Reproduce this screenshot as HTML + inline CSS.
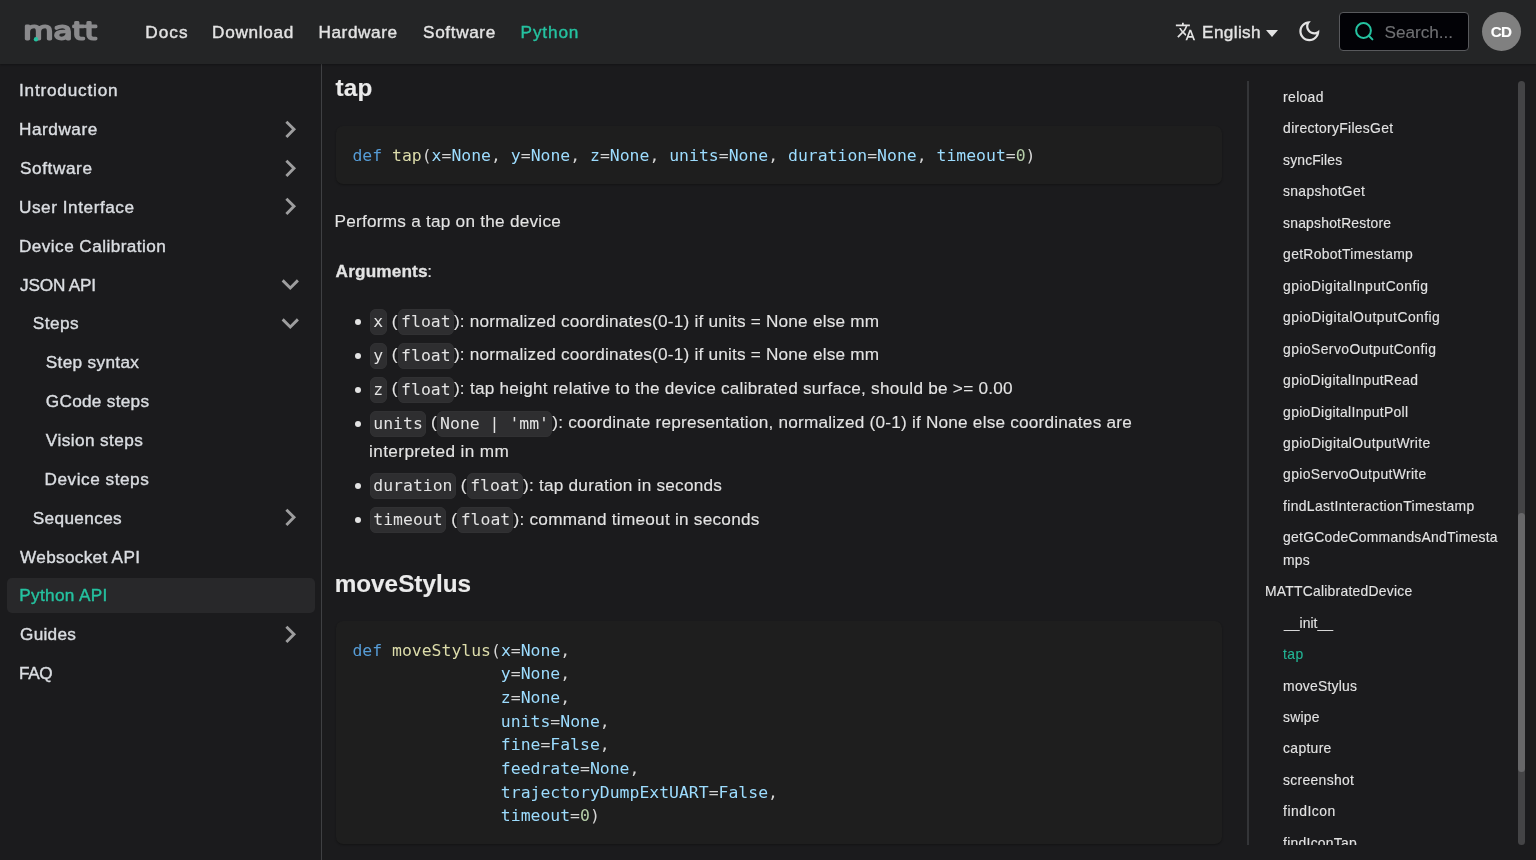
<!DOCTYPE html>
<html lang="en"><head>
<meta charset="utf-8">
<title>Python API | MATT</title>
<style>
*{box-sizing:border-box;margin:0;padding:0}
html,body{width:1536px;height:860px;overflow:hidden;background:#1b1b1d;color:#e3e3e3;font-family:"Liberation Sans",Arial,sans-serif;-webkit-text-stroke:0.12px}
body{position:relative;will-change:transform}
a{color:inherit;text-decoration:none}
.t{position:relative;white-space:pre}
.navbar{position:absolute;left:0;top:0;width:1536px;height:64px;background:#242526;box-shadow:0 1px 2px 0 rgba(0,0,0,.3);z-index:10}
.logo{position:absolute;left:0;top:0;-webkit-text-stroke:0}
.navlink{-webkit-text-stroke:0.4px;position:absolute;font-size:17.2px;line-height:24px;color:#e3e3e3;white-space:nowrap}
.navlink.active{color:#25c2a0}
.langicon{position:absolute;left:1175.4px;top:20.5px}
.langtext{-webkit-text-stroke:0.4px;position:absolute;left:1202px;font-size:17.2px;line-height:24px;color:#e3e3e3;white-space:nowrap}
.caret{position:absolute;left:1266px;top:30px;width:0;height:0;border-left:6.25px solid transparent;border-right:6.25px solid transparent;border-top:7px solid #e3e3e3}
.moon{position:absolute;left:1295.7px;top:18.2px}
.search{position:absolute;left:1339px;top:12px;width:130px;height:39px;border:1px solid #58595c;border-radius:4px;background:#020206}
.search svg{position:absolute;left:14.4px;top:8px}
.stext{position:absolute;left:44px;font-size:17.2px;line-height:24px;color:#6f7073;white-space:nowrap}
.avatar{position:absolute;left:1482px;top:12px;width:39px;height:39px;border-radius:50%;background:#808080;color:#fff;font-weight:700;font-size:15.2px;line-height:39px;white-space:nowrap;padding-left:8px}
.sidebar{position:absolute;left:0;top:64px;width:322px;height:796px;border-right:1px solid #3f4043}
.sb{-webkit-text-stroke:0.4px;position:absolute;left:6.5px;width:308.2px;height:34.56px;border-radius:5px;font-size:17.2px;line-height:34.56px;color:#dadde1;white-space:nowrap}
.sb.active{background:#28282a;color:#25c2a0}
.chev{position:absolute;left:266.9px;top:-0.4px}
.main{position:absolute;left:335.5px;top:64px;width:886.5px}
h3{position:absolute;left:-1.5px;font-size:24.3px;line-height:30px;font-weight:700;color:#ebebeb;white-space:nowrap}
.code{-webkit-text-stroke:0;position:absolute;left:0;width:886.5px;background:#1e1e1e;border-radius:7px;box-shadow:0 1px 2px 0 rgba(0,0,0,.3);font-family:"DejaVu Sans Mono","Liberation Mono",monospace;font-size:16.44px;line-height:23.66px;color:#9cdcfe;white-space:pre;padding-left:16.9px}
.k{color:#569cd6}.f{color:#dcdcaa}.p{color:#d4d4d4}.n{color:#b5cea8}
p{position:absolute;left:-1.5px;font-size:17.2px;line-height:28.6px;color:#e3e3e3;white-space:nowrap}
ul{list-style:none}
li{position:absolute;left:34.5px;font-size:17.2px;line-height:28.6px;color:#e3e3e3;white-space:nowrap}
.bul{position:absolute;left:19px;width:6.4px;height:6.4px;border-radius:50%;background:#e3e3e3}
code{-webkit-text-stroke:0;font-family:"DejaVu Sans Mono","Liberation Mono",monospace;font-size:16.44px;background:#2e2e30;border:1px solid #313133;border-radius:6px;padding:1.6px 2.3px 3.6px;color:#e3e3e3;white-space:pre}
.toc{position:absolute;left:1248px;top:80.5px;width:267px;height:764.8px;overflow:hidden}
.tocline{position:absolute;left:1247px;top:80.5px;width:2px;height:764.8px;background:#343538}
.toc a{position:absolute;font-size:13.9px;line-height:22px;color:#e3e3e3;white-space:nowrap}
.toc a.active{color:#23b595}
.track{position:absolute;left:1517.7px;top:80.8px;width:7.5px;height:764.5px;background:#444446;border-radius:4px}
.thumb{position:absolute;left:1517.7px;top:513.4px;width:7.5px;height:258.8px;background:#676769;border-radius:4px}
b{-webkit-text-stroke:0.3px;margin-right:1px}
</style>
</head>
<body>
<div class="navbar">
  <svg class="logo" width="110" height="64" viewBox="0 0 110 64">
    <text x="0" y="0" transform="translate(23.300 39.200) scale(1.380 1)" font-family="DejaVu Sans, Liberation Sans, sans-serif" font-weight="200" font-size="22.500" fill="#8a8a8c" stroke="#8a8a8c" stroke-width="2.800" stroke-linejoin="round" stroke-linecap="round">matt</text>
    <circle cx="36" cy="39.300" r="2.200" fill="#25c2a0"></circle>
  </svg>
  <div class="nav">
    <a class="navlink" style="left:144.8px;top:20.04px"><span class="t" style="left: 0.5px; letter-spacing: 1.012px;">Docs</span></a>
    <a class="navlink" style="left:211.6px;top:20.04px"><span class="t" style="left: 0.51px; letter-spacing: 0.689px;">Download</span></a>
    <a class="navlink" style="left:317.9px;top:20.04px"><span class="t" style="left: 0.51px; letter-spacing: 0.607px;">Hardware</span></a>
    <a class="navlink" style="left:421.6px;top:20.04px"><span class="t" style="left: 1.51px; letter-spacing: 0.619px;">Software</span></a>
    <a class="navlink active" style="left:520.1px;top:20.04px"><span class="t" style="left: 0.51px; letter-spacing: 0.85px;">Python</span></a>
  </div>
  <svg class="langicon" width="21" height="21" viewBox="0 0 24 24"><path fill="#e3e3e3" d="M12.870 15.070l-2.540-2.510.030-.030c1.740-1.940 2.980-4.170 3.710-6.530H17V4h-7V2H8v2H1v1.990h11.170C11.500 7.920 10.440 9.750 9 11.350 8.070 10.320 7.300 9.190 6.690 8h-2c.730 1.630 1.730 3.170 2.980 4.560l-5.090 5.020L4 19l5-5 3.110 3.110.760-2.040zM18.500 10h-2L12 22h2l1.120-3h4.750L21 22h2l-4.500-12zm-2.620 7l1.620-4.330L19.120 17h-3.240z"></path></svg>
  <a class="langtext" style="top:19.74px"><span class="t" style="left: 0.1px; letter-spacing: 0.348px;">English</span></a>
  <div class="caret"></div>
  <svg class="moon" width="26.670" height="26.670" viewBox="0 0 24 24"><path fill="#e3e3e3" d="M9.370 5.510c-.180.640-.270 1.310-.270 1.990 0 4.080 3.320 7.400 7.400 7.400.680 0 1.350-.090 1.990-.270C17.450 17.190 14.930 19 12 19c-3.860 0-7-3.140-7-7 0-2.930 1.810-5.450 4.370-6.490zM12 3c-4.970 0-9 4.030-9 9s4.030 9 9 9 9-4.030 9-9c0-.460-.040-.920-.100-1.360-.980 1.370-2.580 2.260-4.400 2.260-2.980 0-5.400-2.420-5.400-5.400 0-1.810.890-3.420 2.260-4.400-.440-.060-.900-.100-1.360-.100z"></path></svg>
  <div class="search">
    <svg width="22" height="22" viewBox="0 0 22 22" fill="none" stroke="#25c2a0" stroke-width="2" stroke-linecap="round"><circle cx="9.500" cy="9.500" r="7.400"></circle><path d="M14.800 14.800L18.400 18.400"></path></svg>
    <a class="stext" style="top:6.74px"><span class="t" style="left: 0.6px; letter-spacing: -0.039px;">Search...</span></a>
  </div>
  <div class="avatar"><span class="t" style="left: 0.7px; letter-spacing: -0.568px;">CD</span></div>
</div>
<div class="sidebar">
  <a class="sb" style="top:9.16px;padding-left:12.2px"><span class="t" style="left: 0.31px; letter-spacing: 0.795px;">Introduction</span></a>
  <a class="sb" style="top:48.03px;padding-left:12.2px"><span class="t" style="left: 0.31px; letter-spacing: 0.536px;">Hardware</span><svg class="chev" width="34.560" height="34.560" viewBox="0 0 24 24"><path fill="#9e9e9f" d="M7.410 15.410L12 10.830l4.590 4.580L18 14l-6-6-6 6z" transform="rotate(90 12 12)"></path></svg></a>
  <a class="sb" style="top:86.90px;padding-left:12.2px"><span class="t" style="left: 1.31px; letter-spacing: 0.59px;">Software</span><svg class="chev" width="34.560" height="34.560" viewBox="0 0 24 24"><path fill="#9e9e9f" d="M7.410 15.410L12 10.830l4.590 4.580L18 14l-6-6-6 6z" transform="rotate(90 12 12)"></path></svg></a>
  <a class="sb" style="top:125.77px;padding-left:12.2px"><span class="t" style="left: 0.31px; letter-spacing: 0.547px;">User Interface</span><svg class="chev" width="34.560" height="34.560" viewBox="0 0 24 24"><path fill="#9e9e9f" d="M7.410 15.410L12 10.830l4.590 4.580L18 14l-6-6-6 6z" transform="rotate(90 12 12)"></path></svg></a>
  <a class="sb" style="top:164.64px;padding-left:12.2px"><span class="t" style="left: 0.31px; letter-spacing: 0.435px;">Device Calibration</span></a>
  <a class="sb" style="top:203.51px;padding-left:12.2px"><span class="t" style="left: 1.31px; letter-spacing: -0.177px;">JSON API</span><svg class="chev" width="34.560" height="34.560" viewBox="0 0 24 24"><path fill="#9e9e9f" d="M7.410 15.410L12 10.830l4.590 4.580L18 14l-6-6-6 6z" transform="rotate(180 12 12)"></path></svg></a>
  <a class="sb" style="top:242.38px;padding-left:25.0px"><span class="t" style="left: 1.3px; letter-spacing: 0.486px;">Steps</span><svg class="chev" width="34.560" height="34.560" viewBox="0 0 24 24"><path fill="#9e9e9f" d="M7.410 15.410L12 10.830l4.590 4.580L18 14l-6-6-6 6z" transform="rotate(180 12 12)"></path></svg></a>
  <a class="sb" style="top:281.25px;padding-left:38.0px"><span class="t" style="left: 1.3px; letter-spacing: 0.329px;">Step syntax</span></a>
  <a class="sb" style="top:320.12px;padding-left:38.0px"><span class="t" style="left: 1.3px; letter-spacing: 0.288px;">GCode steps</span></a>
  <a class="sb" style="top:358.99px;padding-left:38.0px"><span class="t" style="left: 1.3px; letter-spacing: 0.431px;">Vision steps</span></a>
  <a class="sb" style="top:397.86px;padding-left:37.8px"><span class="t" style="left: 0.3px; letter-spacing: 0.527px;">Device steps</span></a>
  <a class="sb" style="top:436.73px;padding-left:24.9px"><span class="t" style="left: 1.31px; letter-spacing: 0.374px;">Sequences</span><svg class="chev" width="34.560" height="34.560" viewBox="0 0 24 24"><path fill="#9e9e9f" d="M7.410 15.410L12 10.830l4.590 4.580L18 14l-6-6-6 6z" transform="rotate(90 12 12)"></path></svg></a>
  <a class="sb" style="top:475.60px;padding-left:12.3px"><span class="t" style="left: 1.3px; letter-spacing: 0.299px;">Websocket API</span></a>
  <a class="sb active" style="top:514.47px;padding-left:12.4px"><span class="t" style="left: 0.31px; letter-spacing: 0.343px;">Python API</span></a>
  <a class="sb" style="top:553.34px;padding-left:12.2px"><span class="t" style="left: 1.31px; letter-spacing: 0.287px;">Guides</span><svg class="chev" width="34.560" height="34.560" viewBox="0 0 24 24"><path fill="#9e9e9f" d="M7.410 15.410L12 10.830l4.590 4.580L18 14l-6-6-6 6z" transform="rotate(90 12 12)"></path></svg></a>
  <a class="sb" style="top:592.21px;padding-left:12.2px"><span class="t" style="left: 0.31px; letter-spacing: -0.407px;">FAQ</span></a>
</div>
<div class="main">
  <h3 style="top:8.98px"><span class="t" style="left: 1.5px; letter-spacing: 0.198px;">tap</span></h3>
  <div class="code" style="top:62.2px;height:58.0px;padding-top:17.88px"><span class="k">def</span> <span class="f">tap</span><span class="p">(</span>x<span class="p">=</span>None<span class="p">,</span> y<span class="p">=</span>None<span class="p">,</span> z<span class="p">=</span>None<span class="p">,</span> units<span class="p">=</span>None<span class="p">,</span> duration<span class="p">=</span>None<span class="p">,</span> timeout<span class="p">=</span><span class="n">0</span><span class="p">)</span></div>
  <p style="top:142.74px"><span class="t" style="left: 0.5px; letter-spacing: 0.242px;">Performs a tap on the device</span></p>
  <p style="top:192.74px"><b class="b t" style="left: 1.6px; letter-spacing: 0.155px;">Arguments</b>:</p>
  <ul>
    <li style="top:242.54px"><code>x</code><span class="t" style="letter-spacing: 0.401px;"> (</span><code>float</code><span class="t" style="letter-spacing: 0.209px;">): normalized coordinates(0-1) if units = None else mm</span></li>
    <li style="top:276.44px"><code>y</code><span class="t" style="letter-spacing: 0.401px;"> (</span><code>float</code><span class="t" style="letter-spacing: 0.209px;">): normalized coordinates(0-1) if units = None else mm</span></li>
    <li style="top:310.34px"><code>z</code><span class="t" style="letter-spacing: 0.401px;"> (</span><code>float</code><span class="t" style="letter-spacing: 0.246px;">): tap height relative to the device calibrated surface, should be &gt;= 0.00</span></li>
    <li style="top:344.24px"><code>units</code><span class="t" style="letter-spacing: 0.112px;"> (</span><code>None | 'mm'</code><span class="t" style="letter-spacing: 0.213px;">): coordinate representation, normalized (0-1) if None else coordinates are</span></li>
    <li style="top:372.94px"><span class="t" style="left: -0.9px; letter-spacing: 0.368px;">interpreted in mm</span></li>
    <li style="top:406.74px"><code>duration</code><span class="t" style="letter-spacing: 0.318px;"> (</span><code>float</code><span class="t" style="letter-spacing: 0.236px;">): tap duration in seconds</span></li>
    <li style="top:440.64px"><code>timeout</code><span class="t" style="letter-spacing: 0.513px;"> (</span><code>float</code><span class="t" style="letter-spacing: 0.253px;">): command timeout in seconds</span></li>
    <i class="bul" style="top:254.8px"></i>
    <i class="bul" style="top:288.7px"></i>
    <i class="bul" style="top:322.6px"></i>
    <i class="bul" style="top:356.5px"></i>
    <i class="bul" style="top:419.0px"></i>
    <i class="bul" style="top:452.9px"></i>
  </ul>
  <h3 style="top:504.78px"><span class="t" style="left: 0.7px; letter-spacing: -0.008px;">moveStylus</span></h3>
  <div class="code" style="top:557.0px;height:223.4px;padding-top:17.78px"><span class="k">def</span> <span class="f">moveStylus</span><span class="p">(</span>x<span class="p">=</span>None<span class="p">,</span>
               y<span class="p">=</span>None<span class="p">,</span>
               z<span class="p">=</span>None<span class="p">,</span>
               units<span class="p">=</span>None<span class="p">,</span>
               fine<span class="p">=</span>False<span class="p">,</span>
               feedrate<span class="p">=</span>None<span class="p">,</span>
               trajectoryDumpExtUART<span class="p">=</span>False<span class="p">,</span>
               timeout<span class="p">=</span><span class="n">0</span><span class="p">)</span></div>
</div>
<div class="tocline"></div>
<div class="toc">
  <a class="" style="top:5.53px;left:34.1px"><span class="t" style="left: 1.01px; letter-spacing: 0.342px;">reload</span></a>
  <a class="" style="top:36.98px;left:34.1px"><span class="t" style="left: 1.01px; letter-spacing: 0.317px;">directoryFilesGet</span></a>
  <a class="" style="top:68.43px;left:34.1px"><span class="t" style="left: 1.01px; letter-spacing: 0.145px;">syncFiles</span></a>
  <a class="" style="top:99.88px;left:34.1px"><span class="t" style="left: 1.01px; letter-spacing: 0.299px;">snapshotGet</span></a>
  <a class="" style="top:131.33px;left:34.1px"><span class="t" style="left: 1.01px; letter-spacing: 0.208px;">snapshotRestore</span></a>
  <a class="" style="top:162.78px;left:34.1px"><span class="t" style="left: 1.01px; letter-spacing: 0.323px;">getRobotTimestamp</span></a>
  <a class="" style="top:194.23px;left:34.1px"><span class="t" style="left: 1.01px; letter-spacing: 0.425px;">gpioDigitalInputConfig</span></a>
  <a class="" style="top:225.68px;left:34.1px"><span class="t" style="left: 1.01px; letter-spacing: 0.455px;">gpioDigitalOutputConfig</span></a>
  <a class="" style="top:257.13px;left:34.1px"><span class="t" style="left: 1.01px; letter-spacing: 0.421px;">gpioServoOutputConfig</span></a>
  <a class="" style="top:288.58px;left:34.1px"><span class="t" style="left: 1.01px; letter-spacing: 0.314px;">gpioDigitalInputRead</span></a>
  <a class="" style="top:320.03px;left:34.1px"><span class="t" style="left: 1.01px; letter-spacing: 0.319px;">gpioDigitalInputPoll</span></a>
  <a class="" style="top:351.48px;left:34.1px"><span class="t" style="left: 1.01px; letter-spacing: 0.396px;">gpioDigitalOutputWrite</span></a>
  <a class="" style="top:382.93px;left:34.1px"><span class="t" style="left: 1.01px; letter-spacing: 0.359px;">gpioServoOutputWrite</span></a>
  <a class="" style="top:414.38px;left:34.1px"><span class="t" style="left: 1.01px; letter-spacing: 0.346px;">findLastInteractionTimestamp</span></a>
  <a class="" style="top:445.83px;left:34.1px"><span class="t" style="left: 1.01px; letter-spacing: 0.259px;">getGCodeCommandsAndTimesta</span></a>
  <a class="" style="top:468.23px;left:34.1px"><span class="t" style="left: 1.01px; letter-spacing: 0.202px;">mps</span></a>
  <a class="" style="top:499.68px;left:16.9px"><span class="t" style="left: 0.01px; letter-spacing: 0.251px;">MATTCalibratedDevice</span></a>
  <a class="" style="top:531.13px;left:34.1px"><span class="t" style="left: 2.01px; letter-spacing: 0.024px;">__init__</span></a>
  <a class="active" style="top:562.58px;left:34.1px"><span class="t" style="left: 1.01px; letter-spacing: 0.358px;">tap</span></a>
  <a class="" style="top:594.03px;left:34.1px"><span class="t" style="left: 1.01px; letter-spacing: 0.228px;">moveStylus</span></a>
  <a class="" style="top:625.48px;left:34.1px"><span class="t" style="left: 1.01px; letter-spacing: 0.203px;">swipe</span></a>
  <a class="" style="top:656.93px;left:34.1px"><span class="t" style="left: 1.01px; letter-spacing: 0.316px;">capture</span></a>
  <a class="" style="top:688.38px;left:34.1px"><span class="t" style="left: 1.01px; letter-spacing: 0.312px;">screenshot</span></a>
  <a class="" style="top:719.83px;left:34.1px"><span class="t" style="left: 1.01px; letter-spacing: 0.496px;">findIcon</span></a>
  <a class="" style="top:751.28px;left:34.1px"><span class="t" style="left: 1.01px; letter-spacing: 0.258px;">findIconTap</span></a>
</div>
<div class="track"></div>
<div class="thumb"></div>


</body></html>
